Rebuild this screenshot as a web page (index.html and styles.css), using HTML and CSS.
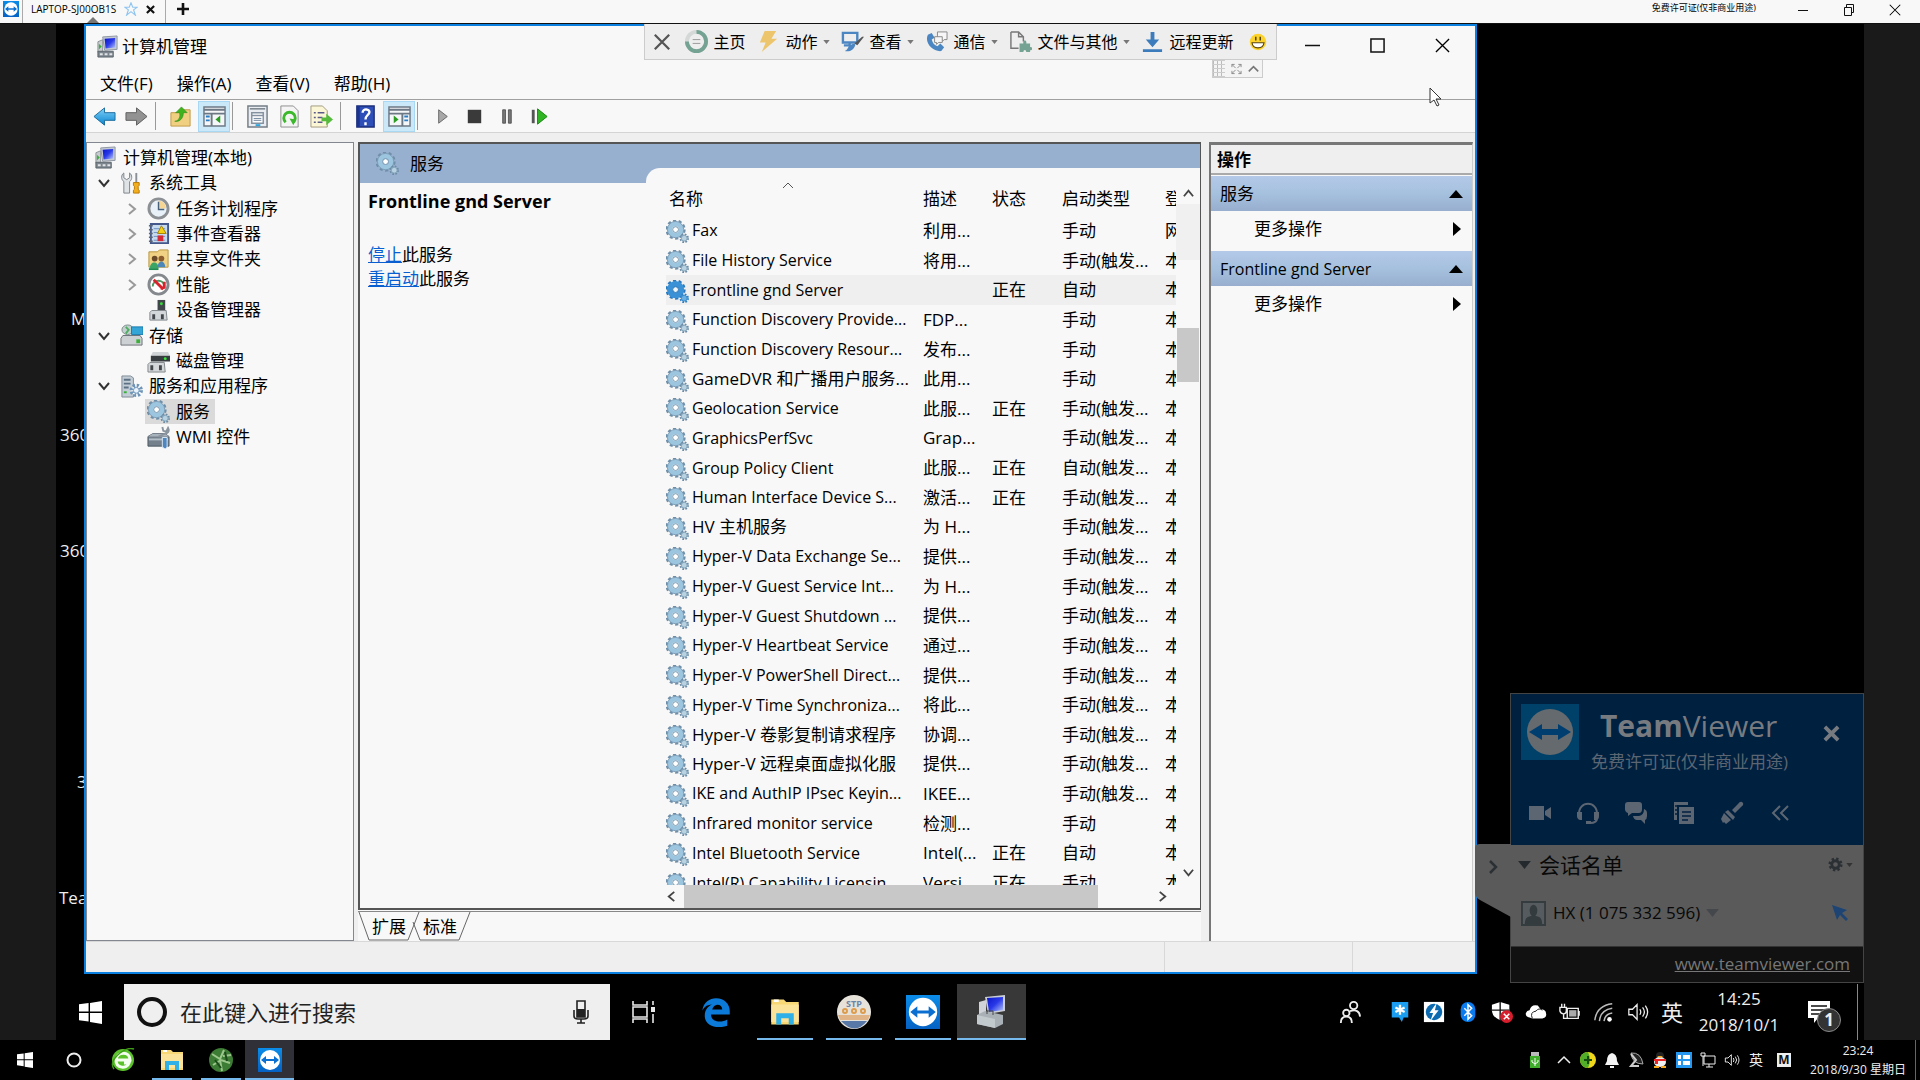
FILE: index.html
```html
<!DOCTYPE html>
<html lang="zh-CN">
<head>
    <meta charset="UTF-8">
    <meta name="viewport" content="width=device-width, initial-scale=1.0">
    <title>LAPTOP-SJ00OB1S</title>
    <link rel="stylesheet" href="styles.css">
</head>
<body>
    <svg class="sprite" aria-hidden="true">
        <defs>
            <linearGradient id="blueScreen" x1="0" y1="0" x2="1" y2="1"><stop offset="0" stop-color="#0a14c8"/><stop offset=".5" stop-color="#2a3ae8"/><stop offset="1" stop-color="#b8c8f8"/></linearGradient>
            <linearGradient id="tvBlue" x1="0" y1="0" x2="0" y2="1"><stop offset="0" stop-color="#0b8ce8"/><stop offset="1" stop-color="#0562c4"/></linearGradient>
            <linearGradient id="arrowBlue" x1="0" y1="0" x2="0" y2="1"><stop offset="0" stop-color="#7fd0f8"/><stop offset="1" stop-color="#0a86d0"/></linearGradient>
        </defs>
        <symbol id="computer" viewBox="0 0 24 24">
            <path d="M2 7l5-2v13H2z" fill="#c8ccd0" stroke="#8a9098"/>
            <path d="M7 2l15-1v14l-13 1z" fill="#c4cad4" stroke="#8d95a2"/>
            <path d="M9 4l11-1v10l-10 1z" fill="url(#blueScreen)"/>
            <path d="M3 9l3 3-3 3z" fill="#3cae3c"/>
            <path d="M2 17h16v6H2z" fill="#7c858d" stroke="#5b646c"/>
            <path d="M4 20h3M9 20h3M14 20h3" stroke="#e0e4e8" stroke-width="2"/>
        </symbol>
        <symbol id="gears" viewBox="0 0 24 24">
            <circle cx="10" cy="10" r="8.500" fill="none" stroke="#6f8ea8" stroke-width="4" stroke-dasharray="3 2.340"/>
            <circle cx="10" cy="10" r="6" fill="none" stroke="#9cc6e0" stroke-width="5"/>
            <circle cx="10" cy="10" r="8.500" fill="none" stroke="#7d9db6"/>
            <circle cx="10" cy="10" r="3" fill="#fff" stroke="#6f93ad"/>
            <circle cx="19" cy="19" r="3.500" fill="none" stroke="#6c8ca6" stroke-width="3" stroke-dasharray="1.600 1.150"/>
            <circle cx="19" cy="19" r="3" fill="#b8d2e2" stroke="#83a4bb"/>
        </symbol>
        <symbol id="gears-on" viewBox="0 0 24 24">
            <circle cx="10" cy="10" r="8.500" fill="none" stroke="#2b78bd" stroke-width="4" stroke-dasharray="3 2.340"/>
            <circle cx="10" cy="10" r="6" fill="none" stroke="#3a91d6" stroke-width="6"/>
            <circle cx="10" cy="10" r="3" fill="#eef6fc" stroke="#1f6db1"/>
            <circle cx="19" cy="19" r="3.500" fill="none" stroke="#2e7fc2" stroke-width="3" stroke-dasharray="1.600 1.150"/>
            <circle cx="19" cy="19" r="3" fill="#6ab0e2" stroke="#3a8cce"/>
        </symbol>
        <symbol id="tools" viewBox="0 0 24 24">
            <path d="M4 1v5l3 2 3-2V1c3 2 3 7 0 9v12H4V10C1 8 1 3 4 1z" fill="#dfe3e6" stroke="#7c8389"/>
            <path d="M17 1v10" stroke="#8a9096" stroke-width="2"/><path d="M14 11h6v3l-1 1v3l1 1v3h-6v-3l1-1v-3l-1-1z" fill="#f2ae1c" stroke="#b87808"/>
        </symbol>
        <symbol id="clock" viewBox="0 0 24 24">
            <circle cx="12" cy="12" r="10" fill="#e9f1f8" stroke="#8c9094" stroke-width="3"/>
            <path d="M12 4a8 8 0 0 1 8 8h-8z" fill="#f5d593"/><path d="M12 5v8h6" fill="none" stroke="#46617e" stroke-width="1.500"/>
        </symbol>
        <symbol id="event" viewBox="0 0 24 24">
            <path d="M4 2h18v20H4z" fill="#c6daf0" stroke="#44588c" stroke-width="2"/><path d="M7 7h12M7 11h12M7 15h12M7 19h12" stroke="#6f8fc0"/>
            <path d="M15 4l5 8H11z" fill="#f6d012" stroke="#a58400"/><path d="M11 14h6v6h-6z" fill="#d82a36"/>
            <path d="M2 4h4M2 8h4M2 12h4M2 16h4M2 20h4" stroke="#5c6678" stroke-width="1.500"/>
        </symbol>
        <symbol id="share" viewBox="0 0 24 24">
            <path d="M2 4h9l2-2h9v18H2z" fill="#f1d284" stroke="#b8943c"/><circle cx="8" cy="11" r="3" fill="#6b4a2a"/><circle cx="15" cy="11" r="3" fill="#8a5c30"/>
            <path d="M3 21c0-8 9-8 9 0z" fill="#3aa564"/><path d="M11 20c0-8 8-8 8 0z" fill="#4d87b8"/><path d="M2 22h10" stroke="#1f8c50" stroke-width="2"/>
        </symbol>
        <symbol id="perf" viewBox="0 0 24 24">
            <circle cx="12" cy="12" r="10" fill="#fff" stroke="#85898d" stroke-width="3"/><path d="M6 14c0-8 12-8 12 0" fill="none" stroke="#4b9860" stroke-width="2"/>
            <path d="M7 7l10 10M14 16l4-1V9" fill="none" stroke="#d8222c" stroke-width="3"/>
        </symbol>
        <symbol id="device" viewBox="0 0 24 24">
            <path d="M11 1h8v11h-8z" fill="#41464a"/><circle cx="15" cy="5" r="1.500" fill="#36dd36"/>
            <path d="M5 12h15l1 10H3v-8z" fill="#d4d7da" stroke="#80868b"/><path d="M7 16v5M16 16v5" stroke="#42474b" stroke-width="3"/>
        </symbol>
        <symbol id="storage" viewBox="0 0 24 24">
            <ellipse cx="8" cy="6" rx="6" ry="5" fill="#c4d0d0" stroke="#7a8a88"/><path d="M6 3l3 3-3 4" stroke="#4fae62" fill="none" stroke-width="2"/>
            <path d="M12 3h12v8H12z" fill="#35a5d8" stroke="#1a7cac"/><path d="M3 12h18l2 3v7H1v-7z" fill="#cdd1d4" stroke="#6b7277"/>
            <path d="M17 16h4v4h-4z" fill="#3fae3c"/>
        </symbol>
        <symbol id="disk" viewBox="0 0 24 24">
            <path d="M6 2h16l2 4H4z" fill="#cfd3d6"/><path d="M4 6h20v6H4z" fill="#373c40"/><circle cx="19" cy="9" r="1.500" fill="#3ae83a"/>
            <path d="M3 13h15l1 10H1v-8z" fill="#d4d7da" stroke="#80868b"/><path d="M5 16v5M14 16v5" stroke="#42474b" stroke-width="3"/>
        </symbol>
        <symbol id="apps" viewBox="0 0 24 24">
            <path d="M2 1h9l3 2v20H2z" fill="#c3cdd6" stroke="#7d8a95"/><path d="M4 5h7M4 9h7M4 13h5" stroke="#5c7284" stroke-width="2"/><path d="M4 18h3" stroke="#3cae3c" stroke-width="2"/>
            <circle cx="17" cy="16" r="5" fill="#fff" stroke="#6e94b8" stroke-width="4" stroke-dasharray="2.200 1.700"/><circle cx="17" cy="16" r="3" fill="#e8f2fa" stroke="#6e94b8"/>
        </symbol>
        <symbol id="wmi" viewBox="0 0 24 24">
            <path d="M1 11l5-3h13l4 3v10H1z" fill="#74808c" stroke="#4c5863"/><path d="M1 11l5-3h13l4 3z" fill="#a8b2bc"/><path d="M2 14h20" stroke="#b4bec8" stroke-width="2"/>
            <path d="M16 1l1 4 3 1 2-4c2 4-1 6-3 6l-7 3" fill="none" stroke="#8a949e" stroke-width="2"/><path d="M16 12h5v10l-2 2-3-2z" fill="#4f86bf" stroke="#d9e8f6"/>
        </symbol>
        <symbol id="tv" viewBox="0 0 24 24">
            <path d="M0 0h24v24H0z" fill="url(#tvBlue)"/><circle cx="12" cy="12" r="10" fill="#fff"/>
            <path d="M3 12l5-4v3h8V8l5 4-5 4v-3H8v3z" fill="#0a6fd0"/>
        </symbol>
        <symbol id="folder" viewBox="0 0 24 24">
            <path d="M1 2h10l2 2h10v18H1z" fill="#f8d775"/><path d="M1 6h22v14H1z" fill="#fbe39a"/><path d="M3 2h4v2H3z" fill="#fff"/>
            <path d="M5 13h14v9h-4v-5H9v5H5z" fill="#2fb0e6"/>
        </symbol>
        <symbol id="win" viewBox="0 0 24 24">
            <path d="M0 3.500l10-1.400V11H0zM11.500 2L24 0v11H11.500zM0 12.500h10v9L0 20zM11.500 12.500H24V24l-12.500-2z" fill="#fff"/>
        </symbol>
        <symbol id="volume" viewBox="0 0 24 24">
            <path d="M2 9h4l5-5v16l-5-5H2zM14 9q2 3 0 6M17 7q4 5 0 10M20 5q5 7 0 14" fill="none" stroke="#eee" stroke-width="1.400"/>
        </symbol>
        <symbol id="close" viewBox="0 0 16 16"><path d="M1 1l14 14M15 1L1 15" fill="none" stroke="currentColor" stroke-width="1.400"/></symbol>
        <symbol id="down" viewBox="0 0 8 5"><path d="M0 0h8L4 5z" fill="currentColor"/></symbol>
        <symbol id="chevron" viewBox="0 0 12 12"><path d="M3 1l6 5-6 5" fill="none" stroke="currentColor" stroke-width="2"/></symbol>
    </svg>

    <header class="client-bar">
        <svg class="client-logo"><use href="#tv"/></svg>
        <div class="client-tab">
            <span>LAPTOP-SJ00OB1S</span>
            <button aria-label="收藏"><svg class="star" viewBox="0 0 16 16"><path d="M8 1l2 5h5l-4 3 2 6-5-4-5 4 2-6-4-3h5z" fill="none" stroke="#8fc4f0" stroke-width="1.300"/></svg></button>
            <button aria-label="关闭"><svg class="tab-close" viewBox="0 0 10 10"><path d="M1 1l8 8M9 1L1 9" stroke="#111" stroke-width="2.400"/></svg></button>
        </div>
        <button class="client-add" aria-label="新建"><svg viewBox="0 0 12 12"><path d="M6 0v12M0 6h12" stroke="#111" stroke-width="2.600"/></svg></button>
        <span class="client-licence">免费许可证(仅非商业用途)</span>
        <div class="client-controls">
            <button aria-label="最小化"><svg viewBox="0 0 12 12"><path d="M1 6.500h10" stroke="#111"/></svg></button>
            <button aria-label="还原"><svg viewBox="0 0 12 12"><path d="M1.500 3.500h7v8h-7zM3.500 3V.5h7v8H9" fill="none" stroke="#111"/></svg></button>
            <button aria-label="关闭"><svg><use href="#close"/></svg></button>
        </div>
    </header>

    <main class="stage">
        <div class="desktop">
            <span class="label label-m">Microsoft</span>
            <span class="label label-360a">360安全</span>
            <span class="label label-360b">360软件</span>
            <span class="label label-3">360</span>
            <span class="label label-tea">TeamViewer</span>

            <section class="window">
                <div class="title-bar">
                    <svg class="icon"><use href="#computer"/></svg>
                    <h1>计算机管理</h1>
                    <div class="window-controls">
                        <button aria-label="最小化"><svg viewBox="0 0 16 16"><path d="M0 8h16" stroke="#111" stroke-width="1.600"/></svg></button>
                        <button aria-label="最大化"><svg viewBox="0 0 16 16"><path d="M1 1h14v14H1z" fill="none" stroke="#111" stroke-width="1.600"/></svg></button>
                        <button aria-label="关闭"><svg><use href="#close"/></svg></button>
                    </div>
                </div>
                <nav class="menu">
                    <button>文件(F)</button>
                    <button>操作(A)</button>
                    <button>查看(V)</button>
                    <button>帮助(H)</button>
                </nav>
                <div class="toolbar">
                    <button aria-label="后退"><svg viewBox="0 0 24 24"><path d="M1 12L12 3v5h11v8H12v5z" fill="url(#arrowBlue)" stroke="#1a6c9e"/></svg></button>
                    <button aria-label="前进"><svg viewBox="0 0 24 24"><path d="M23 12L12 3v5H1v8h11v5z" fill="#929292" stroke="#5e5e5e"/></svg></button>
                    <i class="sep"></i>
                    <button aria-label="上移"><svg viewBox="0 0 24 24"><path d="M2 8h8l2-3h10v17H2z" fill="#f0cf80" stroke="#c09a44"/><path d="M6 17c5-1 6-5 5-9H7l6-6 6 6h-4c0 6-4 10-9 9z" fill="#3fb21e" stroke="#2b8a12" stroke-width=".6"/></svg></button>
                    <button class="on" aria-label="显示树"><svg viewBox="0 0 24 24"><path d="M1 2h22v20H1z" fill="#f4f6f8" stroke="#6c7884" stroke-width="1.500"/><path d="M1 5h22M1 9h22M9 9v13" stroke="#6c7884" stroke-width="2"/><path d="M3 12h4M3 16h4" stroke="#2a7cc4" stroke-width="2"/><path d="M18 11v8l-5-4z" fill="#2a9c22"/></svg></button>
                    <i class="sep near"></i>
                    <button aria-label="属性"><svg viewBox="0 0 24 24"><path d="M2 1h20v22H2z" fill="#e9edf2" stroke="#737c86" stroke-width="1.500"/><path d="M4 4h16" stroke="#737c86" stroke-width="1.500"/><path d="M6 8h12v11H6zM6 11h12" fill="#fff" stroke="#8491a0" stroke-width="1.500"/><path d="M8 14h8M8 16h8" stroke="#6d8299"/><path d="M10 21h5" stroke="#30a4dc" stroke-width="2"/></svg></button>
                    <button aria-label="刷新"><svg viewBox="0 0 24 24"><path d="M3 1h13l5 5v17H3z" fill="#f4f4f4" stroke="#8c8c8c"/><path d="M8 18a6 6 0 1 1 8 0" fill="none" stroke="#3cb82c" stroke-width="3"/><path d="M12 14l7 1-3 6z" fill="#3cb82c"/></svg></button>
                    <button aria-label="导出列表"><svg viewBox="0 0 24 24"><path d="M1 1h12l5 5v17H1z" fill="#fbf6d6" stroke="#a09a7c"/><path d="M4 8h2M8 8h7M4 13h2M8 13h5M4 18h2M8 18h5" stroke="#5a5a8a" stroke-width="1.500"/><path d="M12 13h5V9l7 6-7 6v-4h-5z" fill="#55bb3c"/></svg></button>
                    <i class="sep"></i>
                    <button aria-label="帮助"><svg viewBox="0 0 24 24"><path d="M3 1h18v22H3z" fill="#2f4fb8" stroke="#1d2f7a" stroke-width="1.500"/><path d="M3 1h3v22H3z" fill="#1b3390"/><path d="M9 8c0-5 8-4 7 0-1 3-4 3-4 7M12 18v3" fill="none" stroke="#fff" stroke-width="2.500"/></svg></button>
                    <button class="on" aria-label="操作窗格"><svg viewBox="0 0 24 24"><path d="M1 2h22v20H1z" fill="#f4f6f8" stroke="#6c7884" stroke-width="1.500"/><path d="M1 5h22M1 9h22M15 9v13" stroke="#6c7884" stroke-width="2"/><path d="M17 12h4M17 16h4" stroke="#2a7cc4" stroke-width="2"/><path d="M6 11v8l5-4z" fill="#2a9c22"/></svg></button>
                    <i class="sep near"></i>
                    <button aria-label="启动"><svg viewBox="0 0 24 24"><path d="M8 5l9 7-9 7z" fill="#a8a8a8" stroke="#686868"/></svg></button>
                    <button aria-label="停止"><svg viewBox="0 0 24 24"><path d="M5 5h14v14H5z" fill="#3a3a3a"/></svg></button>
                    <button aria-label="暂停"><svg viewBox="0 0 24 24"><path d="M8 5h3v14H8zM14 5h3v14h-3z" fill="#777" stroke="#444" stroke-width=".8"/></svg></button>
                    <button aria-label="重新启动"><svg viewBox="0 0 24 24"><path d="M5 5h3v14H5z" fill="#555"/><path d="M11 4l10 8-10 8z" fill="#2fb424" stroke="#1a8412"/></svg></button>
                </div>

                <div class="panes">
                    <ul class="tree">
                        <li><svg class="icon"><use href="#computer"/></svg><span>计算机管理(本地)</span></li>
                        <li class="level-1"><button class="open" aria-label="折叠"><svg><use href="#chevron"/></svg></button><svg class="icon"><use href="#tools"/></svg><span>系统工具</span></li>
                        <li class="level-2"><button aria-label="展开"><svg><use href="#chevron"/></svg></button><svg class="icon"><use href="#clock"/></svg><span>任务计划程序</span></li>
                        <li class="level-2"><button aria-label="展开"><svg><use href="#chevron"/></svg></button><svg class="icon"><use href="#event"/></svg><span>事件查看器</span></li>
                        <li class="level-2"><button aria-label="展开"><svg><use href="#chevron"/></svg></button><svg class="icon"><use href="#share"/></svg><span>共享文件夹</span></li>
                        <li class="level-2"><button aria-label="展开"><svg><use href="#chevron"/></svg></button><svg class="icon"><use href="#perf"/></svg><span>性能</span></li>
                        <li class="level-2 leaf"><svg class="icon"><use href="#device"/></svg><span>设备管理器</span></li>
                        <li class="level-1"><button class="open" aria-label="折叠"><svg><use href="#chevron"/></svg></button><svg class="icon"><use href="#storage"/></svg><span>存储</span></li>
                        <li class="level-2 leaf"><svg class="icon"><use href="#disk"/></svg><span>磁盘管理</span></li>
                        <li class="level-1"><button class="open" aria-label="折叠"><svg><use href="#chevron"/></svg></button><svg class="icon"><use href="#apps"/></svg><span>服务和应用程序</span></li>
                        <li class="level-2 leaf"><div class="picked"><svg class="icon"><use href="#gears"/></svg><span>服务</span></div></li>
                        <li class="level-2 leaf"><svg class="icon"><use href="#wmi"/></svg><span>WMI 控件</span></li>
                    </ul>

                    <div class="center">
                        <div class="services">
                            <div class="detail">
                                <div class="detail-head"><svg class="icon"><use href="#gears"/></svg><span>服务</span></div>
                                <h2>Frontline gnd Server</h2>
                                <p><a href="#">停止</a>此服务<br><a href="#">重启动</a>此服务</p>
                            </div>
                            <div class="list-wrap">
                                <div class="list">
                                    <div class="list-body">
                                        <div class="list-clip">
                                            <table>
                                                <thead>
                                                    <tr><th class="c-name">名称<svg class="sort" viewBox="0 0 12 7"><path d="M1 6l5-5 5 5" fill="none" stroke="#555"/></svg></th><th class="c-desc">描述</th><th class="c-state">状态</th><th class="c-type">启动类型</th><th>登</th></tr>
                                                </thead>
                                                <tbody>
                                                    <tr><td><svg class="icon"><use href="#gears"/></svg>Fax</td><td>利用...</td><td></td><td>手动</td><td>网</td></tr>
                                                    <tr><td><svg class="icon"><use href="#gears"/></svg>File History Service</td><td>将用...</td><td></td><td>手动(触发...</td><td>本</td></tr>
                                                    <tr class="current"><td><svg class="icon"><use href="#gears-on"/></svg>Frontline gnd Server</td><td></td><td>正在</td><td>自动</td><td>本</td></tr>
                                                    <tr><td><svg class="icon"><use href="#gears"/></svg>Function Discovery Provide...</td><td>FDP...</td><td></td><td>手动</td><td>本</td></tr>
                                                    <tr><td><svg class="icon"><use href="#gears"/></svg>Function Discovery Resour...</td><td>发布...</td><td></td><td>手动</td><td>本</td></tr>
                                                    <tr class="cjk"><td><svg class="icon"><use href="#gears"/></svg>GameDVR 和广播用户服务...</td><td>此用...</td><td></td><td>手动</td><td>本</td></tr>
                                                    <tr><td><svg class="icon"><use href="#gears"/></svg>Geolocation Service</td><td>此服...</td><td>正在</td><td>手动(触发...</td><td>本</td></tr>
                                                    <tr><td><svg class="icon"><use href="#gears"/></svg>GraphicsPerfSvc</td><td>Grap...</td><td></td><td>手动(触发...</td><td>本</td></tr>
                                                    <tr><td><svg class="icon"><use href="#gears"/></svg>Group Policy Client</td><td>此服...</td><td>正在</td><td>自动(触发...</td><td>本</td></tr>
                                                    <tr><td><svg class="icon"><use href="#gears"/></svg>Human Interface Device S...</td><td>激活...</td><td>正在</td><td>手动(触发...</td><td>本</td></tr>
                                                    <tr class="cjk"><td><svg class="icon"><use href="#gears"/></svg>HV 主机服务</td><td>为 H...</td><td></td><td>手动(触发...</td><td>本</td></tr>
                                                    <tr><td><svg class="icon"><use href="#gears"/></svg>Hyper-V Data Exchange Se...</td><td>提供...</td><td></td><td>手动(触发...</td><td>本</td></tr>
                                                    <tr><td><svg class="icon"><use href="#gears"/></svg>Hyper-V Guest Service Int...</td><td>为 H...</td><td></td><td>手动(触发...</td><td>本</td></tr>
                                                    <tr><td><svg class="icon"><use href="#gears"/></svg>Hyper-V Guest Shutdown ...</td><td>提供...</td><td></td><td>手动(触发...</td><td>本</td></tr>
                                                    <tr><td><svg class="icon"><use href="#gears"/></svg>Hyper-V Heartbeat Service</td><td>通过...</td><td></td><td>手动(触发...</td><td>本</td></tr>
                                                    <tr><td><svg class="icon"><use href="#gears"/></svg>Hyper-V PowerShell Direct...</td><td>提供...</td><td></td><td>手动(触发...</td><td>本</td></tr>
                                                    <tr><td><svg class="icon"><use href="#gears"/></svg>Hyper-V Time Synchroniza...</td><td>将此...</td><td></td><td>手动(触发...</td><td>本</td></tr>
                                                    <tr class="cjk"><td><svg class="icon"><use href="#gears"/></svg>Hyper-V 卷影复制请求程序</td><td>协调...</td><td></td><td>手动(触发...</td><td>本</td></tr>
                                                    <tr class="cjk"><td><svg class="icon"><use href="#gears"/></svg>Hyper-V 远程桌面虚拟化服</td><td>提供...</td><td></td><td>手动(触发...</td><td>本</td></tr>
                                                    <tr><td><svg class="icon"><use href="#gears"/></svg>IKE and AuthIP IPsec Keyin...</td><td>IKEE...</td><td></td><td>手动(触发...</td><td>本</td></tr>
                                                    <tr><td><svg class="icon"><use href="#gears"/></svg>Infrared monitor service</td><td>检测...</td><td></td><td>手动</td><td>本</td></tr>
                                                    <tr><td><svg class="icon"><use href="#gears"/></svg>Intel Bluetooth Service</td><td>Intel(...</td><td>正在</td><td>自动</td><td>本</td></tr>
                                                    <tr><td><svg class="icon"><use href="#gears"/></svg>Intel(R) Capability Licensin</td><td>Versi</td><td>正在</td><td>手动</td><td>本</td></tr>
                                                </tbody>
                                            </table>
                                        </div>
                                        <div class="v-scroll"><svg class="up"><use href="#chevron"/></svg><div class="v-track"></div><div class="v-thumb"></div><svg class="dn"><use href="#chevron"/></svg></div>
                                    </div>
                                    <div class="h-scroll"><svg class="lf"><use href="#chevron"/></svg><div class="h-thumb"></div><svg><use href="#chevron"/></svg></div>
                                </div>
                            </div>
                        </div>
                        <div class="view-tabs">
                            <button>扩展<svg viewBox="0 0 62 30"><path d="M1 0l10 28h39L61 0" fill="none" stroke="#666"/></svg></button>
                            <button>标准<svg viewBox="0 0 62 30"><path d="M4 10l7 18h39L61 0" fill="none" stroke="#666"/></svg></button>
                        </div>
                    </div>

                    <aside class="actions">
                        <h2>操作</h2>
                        <h3>服务<svg viewBox="0 0 14 8"><path d="M7 0l7 8H0z"/></svg></h3>
                        <button>更多操作<svg viewBox="0 0 8 14"><path d="M0 0l8 7-8 7z"/></svg></button>
                        <h3>Frontline gnd Server<svg viewBox="0 0 14 8"><path d="M7 0l7 8H0z"/></svg></h3>
                        <button>更多操作<svg viewBox="0 0 8 14"><path d="M0 0l8 7-8 7z"/></svg></button>
                    </aside>
                </div>
                <div class="status"><span></span><span></span></div>
            </section>

            <div class="session-bar">
                <button class="s-close" aria-label="关闭"><svg viewBox="0 0 20 20"><path d="M2 2l16 16M18 2L2 18" stroke="#555" stroke-width="2.500"/></svg></button>
                <button><svg viewBox="0 0 24 24"><circle cx="12" cy="12" r="10" fill="none" stroke="#d4d8d6" stroke-width="4"/><path d="M12 2a10 10 0 1 1-10 10" fill="none" stroke="#74a293" stroke-width="4"/><path d="M8 10h8M8 14h8" stroke="#999"/></svg>主页</button>
                <button><svg viewBox="0 0 24 24"><path d="M8 1h12l-5 8h6L5 23l4-10H3z" fill="#edc56c"/></svg>动作<svg class="drop"><use href="#down"/></svg></button>
                <button><svg viewBox="0 0 24 24"><path d="M2 3h15v10H2zM9 13v3H3" fill="none" stroke="#4b86c2" stroke-width="2.500"/><path d="M24 7l-7 9-3-2 8-7z" fill="#555"/><path d="M15 15c-1 5-5 8-11 7 3-1 3-4 5-6 2-1 4-2 6-1z" fill="#4b86c2"/></svg>查看<svg class="drop"><use href="#down"/></svg></button>
                <button><svg viewBox="0 0 24 24"><path d="M3 5l4-2 3 5-3 2c1 4 3 6 6 7l3-3 4 4-3 4C8 23-1 13 3 5z" fill="#4b86c2"/><path d="M13 2h10v8h-3l-2 2v-2h-5z" fill="#f6f6f6" stroke="#888"/><path d="M10 7h8v6h-4l-2 2v-2h-2z" fill="#f6f6f6" stroke="#888"/></svg>通信<svg class="drop"><use href="#down"/></svg></button>
                <button><svg viewBox="0 0 24 24"><path d="M2 2h8l5 5v5M2 2v17h8M10 2v5h5" fill="none" stroke="#777" stroke-width="1.500"/><path d="M11 14h4c-1-4 4-4 3 0h4v4c3-1 3 4 0 3v2h-4c0-3-3-3-3 0h-4z" fill="#74a293"/></svg>文件与其他<svg class="drop"><use href="#down"/></svg></button>
                <button><svg viewBox="0 0 24 24"><path d="M10 2h4v8h5l-7 8-7-8h5zM2 20h20v3H2z" fill="#3c7cbc"/></svg>远程更新</button>
                <button class="s-smile" aria-label="反馈"><svg viewBox="0 0 24 24"><circle cx="12" cy="12" r="11" fill="#fbd32a"/><path d="M9 5v5M15 5v5" stroke="#584410" stroke-width="2"/><path d="M4 13h16c-1 9-15 9-16 0z" fill="#fff" stroke="#584410" stroke-width="1.500"/></svg></button>
                <div class="session-grip">
                    <i></i>
                    <svg viewBox="0 0 12 12"><path d="M1 4V1h3M8 1h3v3M11 8v3H8M4 11H1V8M1 1l4 4M11 1L7 5M11 11L7 7M1 11l4-4" fill="none" stroke="#888"/></svg>
                    <svg viewBox="0 0 14 12"><path d="M1 9l6-6 6 6" fill="none" stroke="#777" stroke-width="2"/></svg>
                </div>
            </div>

            <svg class="pointer" viewBox="0 0 14 20"><path d="M1 1v15l4-3 3 6 2-1-3-6h5z" fill="#fff" stroke="#333"/></svg>

            <section class="panel">
                <button class="handle" aria-label="折叠面板"><svg class="handle-shape" viewBox="0 0 36 73"><path d="M5 0h31v73L5 56q-5-3-5-8V5q0-5 5-5z" fill="#5a5a5a"/><path d="M15 17l6 6-6 6" fill="none" stroke="#2b3034" stroke-width="2.500"/></svg></button>
                <div class="panel-head">
                    <div class="panel-top">
                        <svg class="panel-logo" viewBox="0 0 58 56"><path d="M0 0h58v56H0z" fill="#00416a"/><circle cx="29" cy="28" r="23" fill="#656a6e"/><path d="M8 28l13-8v5h16v-5l13 8-13 8v-5H21v5z" fill="#003e70"/></svg>
                        <div class="panel-name"><strong>Team</strong>Viewer</div>
                        <button class="panel-close" aria-label="关闭"><svg viewBox="0 0 18 18"><path d="M2 2l14 14M16 2L2 16" stroke="#777b80" stroke-width="4"/></svg></button>
                        <div class="panel-licence">免费许可证(仅非商业用途)</div>
                    </div>
                    <div class="panel-tools">
                        <button aria-label="视频"><svg viewBox="0 0 24 24"><path d="M1 5h15v14H1zM17 10l6-4v12l-6-4z"/></svg></button>
                        <button aria-label="语音"><svg viewBox="0 0 24 24"><path d="M3 14C2-1 22-1 21 14v3q0 5-7 5" fill="none" stroke="#5c6672" stroke-width="2"/><path d="M1 11h5v8H4q-3-1-3-4zM18 11h5v4q0 4-3 4h-2zM10 20h5v3h-5z"/></svg></button>
                        <button aria-label="聊天"><svg viewBox="0 0 24 24"><path d="M4 1h11q3 0 3 3v4q0 4-3 4H8l-4 3v-3q-3-1-3-4V4q0-3 3-3z"/><path d="M20 8q3 1 3 4v3q0 3-2 4v4l-4-4h-4q-3 0-4-4h6q5-1 5-7z"/></svg></button>
                        <button aria-label="文件"><svg viewBox="0 0 24 24"><path d="M2 1h14v3H5v15H2zM7 6h15v17H7z"/><path d="M10 11h9M10 15h9M10 19h6M3 5h2M3 9h2M3 13h2" stroke="#002040" stroke-width="1.500"/></svg></button>
                        <button aria-label="白板"><svg viewBox="0 0 24 24"><path d="M22 1q3 2-1 5l-6 6-3-3 6-6q2-3 4-2zM8 9l7 7-2 3-8-8zM4 12l7 7-5 4-2-2-1 1-2-4z"/></svg></button>
                        <button aria-label="收起"><svg viewBox="0 0 24 24"><path d="M12 5l-7 7 7 7M20 5l-7 7 7 7" fill="none" stroke="#5c6672" stroke-width="2"/></svg></button>
                    </div>
                </div>
                <div class="panel-body">
                    <div class="panel-row heading"><svg class="fold"><use href="#down"/></svg><h2>会话名单</h2><svg class="cog" viewBox="0 0 16 16"><circle cx="8" cy="8" r="6" fill="none" stroke="#2b3034" stroke-width="3" stroke-dasharray="2.400 2.310"/><circle cx="8" cy="8" r="4" fill="none" stroke="#2b3034" stroke-width="3"/></svg><svg class="small-drop"><use href="#down"/></svg></div>
                    <div class="panel-row member"><svg class="avatar" viewBox="0 0 26 26"><path d="M1 1h24v24H1z" fill="#555b5e" stroke="#353c40" stroke-width="2"/><ellipse cx="13" cy="10" rx="4" ry="6" fill="#343b3f"/><path d="M4 24c0-8 4-8 9-9 5 1 9 1 9 9z" fill="#343b3f"/></svg><span>HX (1 075 332 596)</span><svg class="fold faint"><use href="#down"/></svg><svg class="control" viewBox="0 0 16 16"><path d="M0 0l15 5-5 3 6 6-2 2-6-6-3 5z" fill="#1d4473"/></svg></div>
                </div>
                <div class="panel-foot"><a href="#">www.teamviewer.com</a></div>
            </section>

            <footer class="remote-bar">
                <button class="start" aria-label="开始"><svg><use href="#win"/></svg></button>
                <label class="search">
                    <svg class="ring" viewBox="0 0 32 32"><circle cx="16" cy="16" r="13" fill="none" stroke="#111" stroke-width="4"/></svg>
                    <input type="text" placeholder="在此键入进行搜索" aria-label="搜索">
                    <svg class="mic" viewBox="0 0 16 24"><path d="M4 1h8v16H4zM1 10v6q0 3 4 3h6q4 0 4-3v-6M8 19v4M4 23h8" fill="none" stroke="#222" stroke-width="1.600"/><path d="M4 9h8v8H4z" fill="#222"/></svg>
                </label>
                <div class="remote-apps">
                    <button aria-label="任务视图"><svg class="mid" viewBox="0 0 24 24"><path d="M1 1v4h14V1M1 7h14v10H1zM1 23v-4h14v4M21 1v4M21 14v9" fill="none" stroke="#e8e8e8" stroke-width="1.600"/><path d="M19 7h4v5h-4z" fill="#e8e8e8"/></svg></button>
                    <button aria-label="Edge"><svg viewBox="0 0 24 24"><path d="M1 11C2 4 7 1 12 1c7 0 11 5 11 10v3H8c0 6 8 7 13 4v5c-9 3-18 0-18-8 0-5 3-8 6-9-5 0-7 3-8 5zM9 10h8c0-5-7-5-8 0z" fill="#0c7ad8"/></svg></button>
                    <button class="running" aria-label="资源管理器"><svg><use href="#folder"/></svg></button>
                    <button class="running" aria-label="STP"><svg class="big" viewBox="0 0 34 34"><circle cx="17" cy="17" r="17" fill="#e6e2da"/><text x="17" y="12" text-anchor="middle" font-size="9" font-weight="700" fill="#6b84a8">STP</text><g fill="none" stroke="#dd9c4c" stroke-width="2"><circle cx="8" cy="16" r="2"/><circle cx="17" cy="16" r="2"/><circle cx="26" cy="16" r="2"/></g><path d="M1 20h32l-2 5H3z" fill="#e0b486"/><path d="M4 26h26q-12 15-26 0z" fill="#5878a8"/></svg></button>
                    <button class="running" aria-label="TeamViewer"><svg class="big"><use href="#tv"/></svg></button>
                    <button class="running active" aria-label="计算机管理"><svg class="big" viewBox="0 0 34 34"><path d="M4 7l7-2v18H4z" fill="#d0d4d8"/><path d="M10 2l20-2v16l-17 3z" fill="#c9ced6"/><path d="M12 3l16-1v13l-14 2z" fill="url(#blueScreen)"/><path d="M2 20l8-4 18 4v9l-8 4-18-4z" fill="#a9b1b6"/><path d="M2 20l18 4v9L2 29z" fill="#c3cacd"/><path d="M12 19v-3h6v4" fill="none" stroke="#444"/></svg></button>
                </div>
                <div class="remote-tray">
                    <svg class="people" viewBox="0 0 24 24"><circle cx="16" cy="5" r="4"/><circle cx="8" cy="13" r="3.500"/><path d="M2 24q0-7 6-7t6 7M12 11q10-3 11 6"/></svg>
                    <svg viewBox="0 0 24 24"><path d="M3 1h18v17h-5l-2 5-3-5H3z" fill="#1b9df2"/><path d="M12 4v11M7 7l10 5M17 7L7 12" stroke="#fff" stroke-width="2.500"/></svg>
                    <svg viewBox="0 0 24 24"><path d="M1 1h22v22H1z" fill="#fff"/><circle cx="12" cy="12" r="9" fill="#0c6bb0"/><path d="M15 2L7 13h4l-3 9 9-12h-4z" fill="#fff"/></svg>
                    <svg viewBox="0 0 24 24"><rect x="4" y="1" width="16" height="22" rx="8" fill="#0a7cf0"/><path d="M8 8l8 8-4 4V4l4 4-8 8" fill="none" stroke="#fff" stroke-width="1.600"/></svg>
                    <svg viewBox="0 0 24 24"><path d="M1 4l9-3 10 3v8q-2 6-10 9Q1 17 1 10z" fill="#fff"/><path d="M10 1v20M1 10h19" stroke="#111" stroke-width="1.500"/><circle cx="17" cy="17" r="7" fill="#d81e2c"/><path d="M14 14l6 6M20 14l-6 6" stroke="#fff" stroke-width="1.600"/></svg>
                    <svg viewBox="0 0 24 24"><path d="M5 18q-5-1-4-5 1-3 4-3 2-7 9-5l3 4q6 0 6 5 1 4-4 5H8z" fill="#fff"/><path d="M8 19q-3-7 4-8 3-4 7-1" fill="none" stroke="#111"/></svg>
                    <svg viewBox="0 0 24 24"><path d="M9 8h12v11H9zM22 11v5M1 7h7v4q0 3-3 3t-4-3zM3 7V3M6 7V3M5 14v5h5" fill="none" stroke="#eee" stroke-width="1.500"/><path d="M11 10h8v7h-8z" fill="#aaa"/></svg>
                    <svg viewBox="0 0 24 24"><path d="M2 21Q4 5 21 3M7 22Q8 10 21 8M12 22q1-8 9-9" fill="none" stroke="#bbb" stroke-width="1.600"/><circle cx="18" cy="20" r="2.500" fill="#fff"/></svg>
                    <svg><use href="#volume"/></svg>
                    <span class="ime">英</span>
                    <div class="remote-clock">14:25<br>2018/10/1</div>
                    <div class="notice"><svg viewBox="0 0 24 24"><path d="M1 1h22v17H11l-4 5v-5H1z" fill="#fff"/><path d="M4 6h16M4 10h16M4 14h12" stroke="#111" stroke-width="1.500"/></svg><b>1</b></div>
                </div>
            </footer>
        </div>
    </main>

    <footer class="local-bar">
        <div class="local-apps">
            <button aria-label="开始"><svg class="s16"><use href="#win"/></svg></button>
            <button aria-label="Cortana"><svg class="s16" viewBox="0 0 16 16"><circle cx="8" cy="8" r="6.500" fill="none" stroke="#eee" stroke-width="2"/></svg></button>
            <button aria-label="浏览器"><svg viewBox="0 0 24 24"><circle cx="12" cy="12" r="11" fill="#5cc22c"/><path d="M5 12h14c0-9-13-9-14 0 0 9 11 9 13 3h-5" fill="none" stroke="#f4fff0" stroke-width="3"/><path d="M3 21Q-2 14 9 5 17-1 23 1" fill="none" stroke="#3f9c18" stroke-width="1.500"/></svg></button>
            <button class="running" aria-label="资源管理器"><svg><use href="#folder"/></svg></button>
            <button class="running" aria-label="叶子"><svg viewBox="0 0 24 24"><circle cx="12" cy="12" r="12" fill="#3d7c34"/><path d="M3 6l8 5 4-9M4 17l8-5 9 3M11 12l2 11M14 8l8-1" fill="none" stroke="#9cc78c" stroke-width="2"/><path d="M6 12l6 8M16 4l2 9" stroke="#1d4c1a" stroke-width="2"/></svg></button>
            <button class="running active" aria-label="TeamViewer"><svg><use href="#tv"/></svg></button>
        </div>
        <div class="local-tray">
            <svg class="usb" viewBox="0 0 16 16"><path d="M4 0h8v4H4z" fill="#bbb"/><path d="M3 4h10v12H3z" fill="#3fae2a"/><path d="M8 6v8M5 8v2l3 2 3-2V8" fill="none" stroke="#fff"/></svg>
            <svg viewBox="0 0 16 16"><path d="M2 11l6-6 6 6" fill="none" stroke="#eee" stroke-width="1.500"/></svg>
            <svg viewBox="0 0 16 16"><circle cx="8" cy="8" r="8" fill="#f0d81c"/><path d="M8 0a8 8 0 0 0 0 16q4-8 0-16z" fill="#52ae28"/><path d="M8 4v8M4 8h8" stroke="#144c10" stroke-width="2"/></svg>
            <svg viewBox="0 0 16 16"><path d="M8 1q5 1 5 8l2 4H1l2-4q0-7 5-8zM6 14h4v2H6z" fill="#f4f4f4"/></svg>
            <svg viewBox="0 0 16 16"><path d="M3 1q10-1 12 11Q4 12 3 1z" fill="#222" stroke="#aaa"/><path d="M3 2l5 6-5 6h8" fill="none" stroke="#ccc" stroke-width="2"/></svg>
            <svg viewBox="0 0 16 16"><circle cx="8" cy="4" r="4" fill="#222"/><ellipse cx="8" cy="10" rx="6" ry="5" fill="#f0f0f0"/><path d="M2 7h12v2H2zM3 9h3v3H3z" fill="#e22"/><path d="M5 4h6l-3 2zM2 14h5v2H2zM9 14h5v2H9z" fill="#f8a81c"/></svg>
            <svg viewBox="0 0 16 16"><path d="M0 0h16v16H0z" fill="#2498f0"/><path d="M2 3h3v4H2zM2 9h3v4H2zM7 3h7v4H7zM7 9h7v4H7z" fill="#fff"/></svg>
            <svg viewBox="0 0 16 16"><path d="M4 4h11v8H4zM9 12v3M6 15h7M1 1h4v3H1zM3 4v10" fill="none" stroke="#eee"/></svg>
            <svg><use href="#volume"/></svg>
            <span>英</span>
            <b>M</b>
            <div class="local-clock">23:24<br>2018/9/30 星期日</div>
        </div>
    </footer>
</body>
</html>
```
FILE: styles.css
```css
* {
    box-sizing: border-box;
}
body {
    margin: 0;
    height: 100vh;
    display: flex;
    flex-direction: column;
    overflow: hidden;
    background: #000;
    color: #000;
    font-family: "Open Sans", "Noto Sans CJK SC", sans-serif;
    font-size: 17px;
    line-height: 24px;
}
h1, h2, h3, p, ul {
    margin: 0;
    padding: 0;
    font-size: 17px;
    font-weight: 400;
    list-style: none;
}
button {
    display: flex;
    align-items: center;
    margin: 0;
    padding: 0;
    border: none;
    background: none;
    color: inherit;
    font: inherit;
    white-space: nowrap;
}
svg {
    display: block;
    flex: none;
}
.sprite {
    position: absolute;
    width: 0;
    height: 0;
}
.icon {
    width: 23px;
    height: 23px;
}

/* local client title bar */
.client-bar {
    display: flex;
    align-items: center;
    height: 24px;
    background: #f8f8f8;
    border-bottom: 1px solid #111;
    flex: none;
}
.client-logo {
    width: 16px;
    height: 16px;
    margin: 0 3px 5px;
}
.client-tab {
    position: relative;
    display: flex;
    align-items: center;
    justify-content: space-between;
    width: 144px;
    height: 23px;
    padding: 0 10px 5px 8px;
    border: 1px solid #aaa;
    border-width: 0 1px;
    font-size: 10px;
    white-space: nowrap;
}
.client-tab::after {
    content: "";
    position: absolute;
    left: 64px;
    bottom: 0;
    border: 6px solid transparent;
    border-top: none;
    border-bottom-color: #777;
}
.star {
    width: 14px;
    height: 14px;
}
.tab-close {
    width: 9px;
    height: 9px;
}
.client-add {
    margin: 0 auto 6px 11px;
}
.client-add svg {
    width: 12px;
    height: 12px;
}
.client-licence {
    font-size: 9px;
    padding-bottom: 7px;
    margin-right: 24px;
}
.client-controls {
    display: flex;
    padding: 0 2px 4px 0;
}
.client-controls button {
    width: 46px;
    height: 19px;
    justify-content: center;
}
.client-controls svg {
    width: 12px;
    height: 12px;
}

/* remote screen */
.stage {
    flex: 1;
    min-height: 0;
    padding: 0 56px;
    background: #1a1a1a;
}
.desktop {
    position: relative;
    display: flex;
    flex-direction: column;
    height: 100%;
    background: #000;
    overflow: hidden;
}
.label {
    position: absolute;
    color: #eee;
    white-space: nowrap;
}
.label-m {
    left: 15px;
    top: 283px;
}
.label-360a {
    left: 4px;
    top: 399px;
}
.label-360b {
    left: 4px;
    top: 515px;
}
.label-3 {
    left: 21px;
    top: 746px;
}
.label-tea {
    left: 3px;
    top: 862px;
}

/* computer management window */
.window {
    position: absolute;
    left: 28px;
    right: 387px;
    top: 0;
    bottom: 66px;
    display: flex;
    flex-direction: column;
    background: #efefef;
    border: 2px solid #0a80e0;
}
.title-bar {
    display: flex;
    align-items: center;
    height: 41px;
    padding-left: 10px;
    background: #f8f8f8;
}
.title-bar h1 {
    flex: 1;
    margin-left: 3px;
}
.window-controls {
    display: flex;
    margin-bottom: 3px;
}
.window-controls button {
    width: 65px;
    height: 38px;
    justify-content: center;
}
.window-controls svg {
    width: 15px;
    height: 15px;
}
.menu {
    display: flex;
    gap: 24px;
    height: 33px;
    padding: 2px 0 0 14px;
    background: #f8f8f8;
    border-bottom: 1px solid #a0a0a0;
}
.toolbar {
    display: flex;
    align-items: center;
    height: 33px;
    padding-left: 2px;
    background: #f8f8f8;
    border-bottom: 1px solid #d4d4d4;
}
.toolbar button {
    width: 32px;
    height: 31px;
    justify-content: center;
}
.toolbar svg {
    width: 23px;
    height: 23px;
}
.toolbar .on {
    background: #cbe8f8;
    border: 1px solid #a8d8f4;
    margin-left: 2px;
}
.sep {
    width: 1px;
    height: 28px;
    margin: 0 8px 0 3px;
    background: #999;
}
.sep.near {
    margin-left: 2px;
}
.panes {
    flex: 1;
    min-height: 0;
    display: flex;
    padding: 9px 2px 0 0;
}
.tree {
    display: grid;
    grid-auto-rows: 1fr;
    width: 268px;
    padding: 2px 0 490px 7px;
    background: #f8f8f8;
    border: 1px solid #828790;
    flex: none;
}
.tree li,
.picked {
    display: flex;
    align-items: center;
    gap: 6px;
}
.tree button {
    width: 12px;
    color: #999;
}
.tree button svg {
    width: 12px;
    height: 12px;
}
.tree .open {
    transform: rotate(90deg);
    color: #333;
}
.tree .level-1 {
    padding-left: 4px;
}
.tree .level-1 button {
    margin-right: 4px;
}
.tree .level-2 {
    padding-left: 32px;
}
.tree .level-2 button {
    margin-right: 3px;
}
.tree .level-2.leaf {
    padding-left: 53px;
}
.picked {
    height: 25px;
    margin-left: -2px;
    padding: 0 5px 0 2px;
    background: #dadada;
}
.center {
    flex: 1;
    min-width: 0;
    display: flex;
    flex-direction: column;
    margin: 0 8px 0 4px;
    background: #f8f8f8;
}
.services {
    flex: 1;
    min-height: 0;
    display: flex;
    border: 2px solid #555;
    border-right-width: 1px;
}
.detail {
    width: 286px;
    flex: none;
}
.detail-head {
    display: flex;
    align-items: center;
    gap: 11px;
    height: 39px;
    padding-left: 16px;
    background: #98b0d0;
}
.detail h2 {
    padding: 6px 0 0 8px;
    font-size: 18px;
    font-weight: 700;
}
.detail p {
    padding: 30px 0 0 8px;
}
a {
    color: #0a5fd0;
}
.list-wrap {
    flex: 1;
    min-width: 0;
    display: flex;
    padding-top: 24px;
    background: linear-gradient(#98b0d0 39px, #f8f8f8 39px);
}
.list {
    flex: 1;
    min-width: 0;
    display: flex;
    flex-direction: column;
    padding: 14px 0 0 20px;
    background: #f8f8f8;
    border-top-left-radius: 14px;
}
.list-body {
    flex: 1;
    min-height: 0;
    display: flex;
}
.list-clip {
    flex: 1;
    min-width: 0;
    overflow: hidden;
}
table {
    width: 100%;
    height: 716px;
    table-layout: fixed;
    border-collapse: collapse;
}
th, td {
    padding: 0;
    text-align: left;
    font-weight: 400;
    white-space: nowrap;
    overflow: hidden;
}
th {
    position: relative;
    height: 34px;
}
th.c-name {
    width: 257px;
    padding-left: 3px;
}
.c-desc {
    width: 69px;
}
.c-state {
    width: 70px;
}
.c-type {
    width: 103px;
}
.sort {
    position: absolute;
    left: 116px;
    top: 0;
    width: 12px;
    height: 7px;
}
td:first-child {
    font-size: 16px;
}
.cjk td:first-child {
    font-size: 17px;
}
td .icon {
    display: inline-block;
    vertical-align: middle;
    margin-right: 3px;
}
.current td {
    background: #efefef;
}
.v-scroll {
    display: flex;
    flex-direction: column;
    align-items: center;
    width: 24px;
    color: #444;
}
.v-scroll svg,
.h-scroll svg {
    width: 11px;
    height: 11px;
}
.up {
    transform: rotate(-90deg);
    margin: 6px 0 5px;
}
.v-track {
    width: 100%;
    height: 56px;
    background: #f0f0f0;
}
.v-thumb {
    width: 22px;
    height: 54px;
    margin: 68px 0 auto;
    background: #c8c8c8;
}
.dn {
    transform: rotate(90deg);
    margin-bottom: 7px;
}
.h-scroll {
    display: flex;
    align-items: center;
    justify-content: space-between;
    height: 23px;
    padding-right: 32px;
    color: #444;
}
.lf {
    transform: rotate(180deg);
}
.h-thumb {
    width: 414px;
    height: 23px;
    margin: 0 auto 0 7px;
    background: #c8c8c8;
}
.view-tabs {
    display: flex;
    height: 30px;
    border-top: 1px solid #888;
    margin-top: 1px;
}
.view-tabs button {
    position: relative;
    width: 51px;
    padding-left: 14px;
}
.view-tabs svg {
    position: absolute;
    left: 0;
    top: 0;
    width: 62px;
    height: 30px;
}
.actions {
    width: 264px;
    flex: none;
    background: #f8f8f8;
    border: 2px solid #777;
    border-width: 3px 1px 0 2px;
    border-right-color: #ccc;
}
.actions h2 {
    height: 30px;
    padding: 3px 0 0 6px;
    font-weight: 700;
    background: #efefef;
    border-bottom: 2px solid #aaa;
}
.actions h3,
.actions button {
    display: flex;
    align-items: center;
    justify-content: space-between;
    width: 100%;
    height: 35px;
    margin-top: 1px;
    padding: 0 9px;
    background: linear-gradient(#b4c9e8, #a5c1de 50%, #98aecf);
}
.actions h3 {
    font-size: 16px;
}
.actions h3:first-of-type {
    font-size: 17px;
}
.actions button {
    margin: 0 0 5px;
    padding: 0 11px 0 43px;
    background: none;
}
.actions h3 svg {
    width: 14px;
    height: 8px;
}
.actions button svg {
    width: 8px;
    height: 14px;
}
.status {
    display: flex;
    justify-content: flex-end;
    height: 31px;
    border-top: 1px solid #d8d8d8;
}
.status span {
    width: 188px;
    border-left: 1px solid #d8d8d8;
}
.status span:last-child {
    width: 123px;
}

/* session toolbar */
.session-bar {
    position: absolute;
    left: 0;
    right: 0;
    top: 0;
    display: flex;
    width: 633px;
    height: 36px;
    margin: 0 auto;
    padding-left: 8px;
    background: #eee;
    border: 1px solid #ccc;
    border-top: none;
    font-size: 16px;
}
.session-bar button {
    flex: none;
    gap: 6px;
    margin-right: 11px;
}
.session-bar button svg {
    width: 23px;
    height: 23px;
}
.session-bar button .drop {
    width: 7px;
    height: 4px;
    margin-left: -1px;
    color: #777;
}
.session-bar .s-close {
    margin-right: 14px;
}
.session-bar .s-close svg,
.session-bar .s-smile svg {
    width: 18px;
    height: 18px;
}
.session-bar .s-smile {
    margin: 0 0 0 4px;
}
.session-grip {
    position: absolute;
    right: 13px;
    top: 35px;
    display: flex;
    align-items: center;
    gap: 6px;
    width: 51px;
    height: 19px;
    padding-right: 2px;
    background: #f4f4f4;
    border: 1px solid #ccc;
}
.session-grip i {
    width: 12px;
    height: 17px;
    background: repeating-linear-gradient(#ccc 0 1px, transparent 1px 4px), repeating-linear-gradient(90deg, #bbb 0 1px, #f4f4f4 1px 4px);
}
.session-grip svg {
    width: 11px;
    height: 12px;
}
.pointer {
    position: absolute;
    left: 1373px;
    top: 63px;
    width: 14px;
    height: 20px;
}

/* dimmed TeamViewer panel */
.panel {
    position: absolute;
    right: 0;
    bottom: 57px;
    width: 354px;
    border: 1px solid #444;
    background: #111;
}
.handle {
    position: absolute;
    left: -36px;
    top: 150px;
}
.handle-shape {
    width: 36px;
    height: 73px;
}
.panel-head {
    height: 151px;
    padding: 10px 22px 0 10px;
    background: #002040;
}
.panel-top {
    display: grid;
    grid-template-columns: 58px 1fr 18px;
    grid-template-rows: 46px 24px;
    column-gap: 14px;
}
.panel-logo {
    width: 58px;
    height: 56px;
    grid-row: 1 / 3;
}
.panel-name {
    padding-left: 7px;
    color: #777b80;
    font-size: 30px;
    line-height: 44px;
}
.panel-close {
    height: 58px;
    grid-row: 1 / 3;
    grid-column: 3;
}
.panel-close svg {
    width: 17px;
    height: 17px;
}
.panel-licence {
    grid-row: 2;
    grid-column: 2;
    margin-left: -2px;
    color: #5c6672;
    white-space: nowrap;
}
.panel-tools {
    display: flex;
    gap: 24px;
    margin: 27px 0 0 7px;
}
.panel-tools svg {
    width: 24px;
    height: 24px;
    fill: #5c6672;
}
.panel-body {
    height: 102px;
    background: #5a5a5a;
    border-bottom: 1px solid #333;
    color: #080808;
}
.panel-row {
    display: flex;
    align-items: center;
    padding: 0 15px 0 7px;
}
.heading {
    height: 39px;
}
.heading h2 {
    flex: 1;
    margin-left: 8px;
    font-size: 21px;
}
.fold {
    width: 13px;
    height: 8px;
    color: #24292e;
}
.cog {
    width: 15px;
    height: 15px;
    margin-right: 3px;
}
.small-drop {
    width: 7px;
    height: 4px;
    margin-right: -5px;
    color: #333;
}
.member {
    height: 58px;
    padding-left: 10px;
}
.avatar {
    width: 25px;
    height: 25px;
    margin-right: 7px;
}
.faint {
    margin-left: 6px;
    color: #44484c;
}
.control {
    width: 16px;
    height: 16px;
    margin-left: auto;
}
.panel-foot {
    height: 35px;
    padding: 5px 13px 0;
    text-align: right;
}
.panel-foot a {
    color: #777;
}

/* remote taskbar */
.remote-bar {
    display: flex;
    height: 56px;
    margin-top: auto;
    padding-right: 6px;
    color: #eee;
}
.start {
    width: 68px;
    justify-content: center;
}
.start svg {
    width: 23px;
    height: 23px;
}
.search {
    display: flex;
    align-items: center;
    width: 486px;
    padding: 0 21px 0 12px;
    background: #efefef;
}
.ring {
    width: 32px;
    height: 32px;
}
.search input {
    flex: 1;
    min-width: 0;
    padding: 0 0 0 12px;
    border: none;
    background: none;
    font: inherit;
    font-size: 22px;
}
.search input::placeholder {
    color: #222;
}
.mic {
    width: 16px;
    height: 24px;
}
.remote-apps {
    display: flex;
}
.remote-apps button {
    position: relative;
    width: 69px;
    justify-content: center;
}
.remote-apps button:first-child {
    width: 71px;
    padding-right: 3px;
}
.remote-apps svg {
    width: 30px;
    height: 30px;
}
.remote-apps .mid {
    width: 24px;
    height: 24px;
}
.remote-apps .big {
    width: 34px;
    height: 34px;
}
.running::after {
    content: "";
    position: absolute;
    left: 7px;
    right: 6px;
    bottom: 0;
    height: 2px;
    background: #76b9ed;
}
.active {
    background: #383838;
}
.active::after {
    left: 0;
    right: 0;
}
.remote-tray {
    display: flex;
    align-items: center;
    margin-left: auto;
    padding-right: 16px;
    border-right: 1px solid #888;
}
.remote-tray > svg {
    width: 22px;
    height: 22px;
    margin: 0 6px;
}
.remote-tray .people {
    margin-right: 22px;
    fill: none;
    stroke: #eee;
    stroke-width: 2;
}
.ime {
    width: 34px;
    text-align: center;
    font-size: 22px;
}
.remote-clock {
    width: 100px;
    text-align: center;
    line-height: 26px;
}
.notice {
    position: relative;
    width: 34px;
    margin-left: 18px;
}
.notice svg {
    width: 24px;
    height: 24px;
}
.notice b {
    position: absolute;
    left: 10px;
    top: 8px;
    width: 24px;
    height: 24px;
    border: 1px solid #888;
    border-radius: 50%;
    background: #333;
    text-align: center;
    line-height: 22px;
}

/* local taskbar */
.local-bar {
    display: flex;
    justify-content: space-between;
    height: 40px;
    padding-right: 4px;
    color: #eee;
    flex: none;
}
.local-apps {
    display: flex;
}
.local-apps button {
    position: relative;
    width: 49px;
    justify-content: center;
}
.local-apps svg {
    width: 24px;
    height: 24px;
}
.local-apps .s16 {
    width: 16px;
    height: 16px;
}
.local-apps .running::after {
    left: 5px;
    right: 4px;
}
.local-apps .active {
    background: #303038;
}
.local-apps .active::after {
    left: 0;
    right: 0;
}
.local-tray {
    display: flex;
    align-items: center;
    border-right: 1px solid #666;
    font-size: 14px;
}
.local-tray > svg {
    width: 16px;
    height: 16px;
    margin: 0 4px;
}
.local-tray .usb {
    margin-right: 9px;
}
.local-tray span {
    width: 24px;
    text-align: center;
}
.local-tray b {
    width: 14px;
    height: 14px;
    margin: 0 10px 0 9px;
    background: #eee;
    color: #111;
    font-size: 12px;
    line-height: 14px;
    text-align: center;
}
.local-clock {
    width: 114px;
    text-align: center;
    font-size: 12px;
    line-height: 19px;
}
```
